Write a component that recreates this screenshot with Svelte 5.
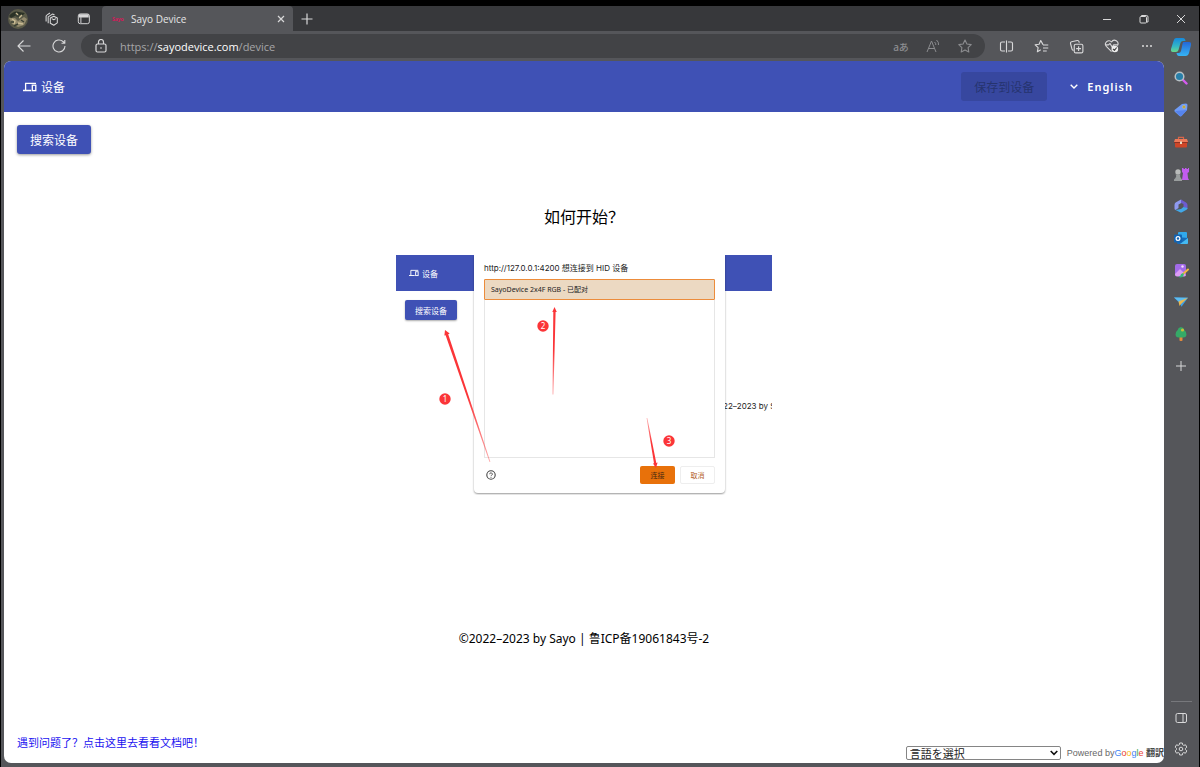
<script>
  let language = $state('');

  // little strokes only, 20x20 boxes
  const pageActions = [
    { name: 'Split screen', d: 'M8 4H4a2 2 0 0 0-2 2v8a2 2 0 0 0 2 2h4M12 4h4a2 2 0 0 1 2 2v8a2 2 0 0 1-2 2h-4M10 2v16' },
    { name: 'Favorites', d: 'M12 7.500 9 2 6.800 7 1.500 7.700l4 3.700-1 5.600L9 14.300M12 8h7M12 12h7M12 16h5' },
    { name: 'Collections', d: 'M6 15a2 2 0 0 1-2-1.500L2 6a2 2 0 0 1 1.500-2.300L11 2a2 2 0 0 1 2.300 1.500L13.600 5M9 7h7.500a2 2 0 0 1 2 2v7.500a2 2 0 0 1-2 2H9a2 2 0 0 1-2-2V9a2 2 0 0 1 2-2M12.800 9.500v6.500M9.500 12.800h6.500' },
  ];
</script>

<div class="browser">
  <header class="titlebar">
    <button class="slot" aria-label="Profile">
      <svg width="20" height="20" viewBox="0 0 20 20">
        <circle cx="10" cy="10" r="10" fill="#5a5a48" />
        <path d="M1 7Q6 1 11 3l6 1-3 3-5-1-6 3z" fill="#2b3226" />
        <path d="M1 9l6 0 3 3 6-4 3 2-3 6-6 2-6-3z" fill="#92896c" />
        <path d="M4 10l3 2-1 3M11 9l3-3M10 14l5 1M8 4l2 2" stroke="#c8bb93" stroke-width="1.500" fill="none" />
        <path d="M7 6l4 2M13 11l3 2M6 17l4-2M3 13l3 0" stroke="#3a4034" stroke-width="1.500" />
      </svg>
    </button>
    <button class="slot" aria-label="Workspaces">
      <svg class="line" width="14" height="14" viewBox="0 0 20 20">
        <path d="M9 8.500l5-2.500 5 2.500v7L14 19l-5-3zM11 9.500l3 1.500 3-1.500M6 16V7l6-4 3 1M3 13.500V6q0-1 1-1.600L8.500 1.500" />
      </svg>
    </button>
    <button class="slot" aria-label="Tab actions">
      <svg class="line" width="13" height="13" viewBox="0 0 20 20">
        <rect x="2" y="3" width="17" height="15" rx="3" /><path d="M3 5h15M3 7h15" stroke-width="3" /><path d="M6 8v9" />
      </svg>
    </button>
    <div class="tab">
      <span class="favicon">Sayo</span>
      <span class="tab-title">Sayo Device</span>
      <button class="close" aria-label="Close tab">
        <svg class="line" width="8" height="8" viewBox="0 0 8 8"><path d="M1 1l6 6M7 1L1 7" stroke-width="1.200" /></svg>
      </button>
    </div>
    <button class="new-tab" aria-label="New tab">
      <svg class="line" width="12" height="12" viewBox="0 0 12 12"><path d="M6 .5v11M.5 6h11" stroke-width="1.200" /></svg>
    </button>
    <div class="window-buttons">
      <button aria-label="Minimize"><svg class="line" width="10" height="10" viewBox="0 0 10 10"><path d="M1 5.500h8" stroke-width="1" /></svg></button>
      <button aria-label="Restore"><svg class="line" width="10" height="10" viewBox="0 0 10 10"><path d="M2.500 2V1.500h5a1.500 1.500 0 0 1 1.500 1.500v5H8" stroke-width="1" /><rect x="1" y="2.500" width="6.500" height="6.500" rx="1" stroke-width="1" /></svg></button>
      <button aria-label="Close"><svg class="line" width="10" height="10" viewBox="0 0 10 10"><path d="M1 1l8 8M9 1L1 9" stroke-width="1" /></svg></button>
    </div>
  </header>

  <div class="frame">
    <div class="main">
      <nav class="toolbar">
        <button class="tool" aria-label="Back">
          <svg class="line" width="14" height="14" viewBox="0 0 14 14"><path d="M13.500 7H1M6.500 1.500L1 7l5.500 5.500" stroke-width="1.100" /></svg>
        </button>
        <button class="tool" aria-label="Refresh">
          <svg class="line" width="14" height="14" viewBox="0 0 14 14"><path d="M13 7A6 6 0 1 1 11 2.500L12.500 4M12.800 1v3.300H9.500" stroke-width="1.100" /></svg>
        </button>
        <div class="address">
          <svg class="line" width="12" height="14" viewBox="0 0 12 14">
            <rect x="1" y="5" width="10" height="8" rx="1.500" stroke-width="1.200" /><path d="M3.500 5V3a2.500 2.500 0 0 1 5 0v2" stroke-width="1.200" /><circle cx="6" cy="9" r=".8" fill="#ddd" stroke="none" />
          </svg>
          <span class="url">https://<b>sayodevice.com</b>/device</span>
          <button class="translate" aria-label="Translate">aあ</button>
          <button aria-label="Read aloud">
            <svg class="line" width="14" height="14" viewBox="0 0 14 14"><path d="M1 13L5.500 2 10 13M2.500 9.500h6M8.500 3q1.500 1 1.300 3M10.500 1q2.500 2 2 5" stroke-width="1" /></svg>
          </button>
          <button aria-label="Add to favorites">
            <svg class="line" width="14" height="14" viewBox="0 0 14 14"><path d="M7 1l1.900 4 4.300.6-3.100 3 .7 4.400L7 10.900 3.200 13l.7-4.400-3.100-3L5.100 5z" stroke-width="1.100" /></svg>
          </button>
        </div>
        {#each pageActions as action}
          <button class="tool" aria-label={action.name}>
            <svg class="line" width="15" height="15" viewBox="0 0 20 20"><path d={action.d} /></svg>
          </button>
        {/each}
        <button class="tool" aria-label="Browser essentials">
          <svg class="line" width="15" height="14" viewBox="0 0 20 19">
            <path d="M10 17L3 10A4.600 4.600 0 0 1 10 4a4.600 4.600 0 0 1 8 5M2 8h4l2-2 3 5 2-3h5" />
            <circle cx="14.500" cy="13.500" r="4.500" fill="#eee" stroke="none" /><path d="M12 13.500l2 2 3-4" stroke="#444" />
          </svg>
        </button>
        <button class="tool" aria-label="More">
          <svg width="14" height="4" viewBox="0 0 14 4" fill="#ddd"><circle cx="3" cy="2" r="1" /><circle cx="7" cy="2" r="1" /><circle cx="11" cy="2" r="1" /></svg>
        </button>
      </nav>

      <div class="page">
        <div class="appbar">
          <a class="brand" href="/device">
            <svg width="14" height="10" viewBox="0 0 14 10" fill="none" stroke="#fff" stroke-width="1.300">
              <path d="M2.600 8V1.300H13M0 8.500h8" /><rect x="9.300" y="3.200" width="3.500" height="5.400" />
            </svg>
            <span>设备</span>
          </a>
          <button class="save" disabled>保存到设备</button>
          <button class="lang">
            <svg width="8" height="5" viewBox="0 0 8 5" fill="none" stroke="#fff" stroke-width="1.400"><path d="M.7.700L4 4 7.300.700" /></svg>
            <span>English</span>
          </button>
        </div>

        <main class="content">
          <button class="search">搜索设备</button>
          <h1>如何开始？</h1>

          <div class="guide">
            <div class="guide-bar">
              <svg width="10" height="8" viewBox="0 0 14 10" fill="none" stroke="#fff" stroke-width="1.300">
                <path d="M2.600 8V1.300H13M0 8.500h8" /><rect x="9.300" y="3.200" width="3.500" height="5.400" />
              </svg>
              <span>设备</span>
            </div>
            <button class="guide-search">搜索设备</button>
            <span class="guide-copy">22–2023 by S</span>

            <div class="dialog">
              <p>http://127.0.0.1:4200 想连接到 HID 设备</p>
              <div class="devices">
                <div class="device">SayoDevice 2x4F RGB - 已配对</div>
              </div>
              <div class="dialog-actions">
                <svg width="10" height="10" viewBox="0 0 10 10" fill="none" stroke="#444">
                  <circle cx="5" cy="5" r="4.200" stroke-width="1.100" /><path d="M3.700 4.200a1.300 1.300 0 1 1 1.900 1.100Q5 5.600 5 6.200M5 7v.8" stroke-width=".9" />
                </svg>
                <button class="connect">连接</button>
                <button class="cancel">取消</button>
              </div>
            </div>

            <svg class="arrows" viewBox="0 0 376 239">
              <defs>
                <linearGradient id="up" x1="0" y1="0" x2="0" y2="1">
                  <stop offset="0.500" stop-color="#fb3538" /><stop offset="1" stop-color="#fb3538" stop-opacity=".4" />
                </linearGradient>
                <linearGradient id="down" x1="0" y1="1" x2="0" y2="0">
                  <stop offset="0.500" stop-color="#fb3538" /><stop offset="1" stop-color="#fb3538" stop-opacity=".4" />
                </linearGradient>
              </defs>
              <path d="M49 75l-.6 5.500 1.200-.3L93.500 207l.9-.2L52.200 79.300l1.500-.7z" fill="url(#up)" />
              <path d="M158.500 52l-2.200 5 1 .1-.8 82.400h.9l2.200-82.400 1.200-.1z" fill="url(#up)" />
              <path d="M260 213l-3-4.500 1-.3L250.600 163l.7-.1 9 45 1.300-.3z" fill="url(#down)" />
              {#each [[49, 144], [147, 71], [273, 186]] as [x, y], i}
                <circle cx={x} cy={y} r="5.700" fill="#fb3538" />
                <text {x} y={y + 3} text-anchor="middle">{i + 1}</text>
              {/each}
            </svg>
          </div>

          <p class="copyright">©2022–2023 by Sayo | 鲁ICP备19061843号-2</p>
        </main>

        <footer>
          <a class="docs" href="/docs">遇到问题了？点击这里去看看文档吧！</a>
          <div class="google">
            <div class="picker">
              <select bind:value={language} aria-label="言語を選択">
                <option value="">言語を選択</option>
              </select>
              <svg width="8" height="6" viewBox="0 0 8 6" fill="none" stroke="#111" stroke-width="1.600"><path d="M.7 1L4 4.300 7.300 1" /></svg>
            </div>
            <span>Powered by</span>
            <a class="logo" href="/translate"><i class="b">G</i><i class="r">o</i><i class="y">o</i><i class="b">g</i><i class="g">l</i><i class="r">e</i> <b>翻訳</b></a>
          </div>
        </footer>
      </div>
    </div>

    <aside class="sidebar">
      <button aria-label="Copilot">
        <svg width="20" height="20" viewBox="0 0 20 20">
          <defs>
            <linearGradient id="cp1" x1="0" y1="0" x2="0" y2="1"><stop offset="0" stop-color="#1689dd" /><stop offset=".6" stop-color="#35b8c4" /><stop offset="1" stop-color="#69d98c" /></linearGradient>
            <linearGradient id="cp2" x1="0" y1="0" x2="0" y2="1"><stop offset="0" stop-color="#2468d8" /><stop offset="1" stop-color="#36b5f5" /></linearGradient>
          </defs>
          <path d="M5 1h7q2 0 2.500 3H12q-2 0-2.600 2L7.500 13q-.6 2-2.500 2H2q-2.500 0-2-3L2.500 4Q3.300 1 5 1z" fill="url(#cp1)" />
          <path d="M12.500 5H18q2.500 0 2 3l-2 8q-.8 3-3.500 3H8q-2 0-2.500-3h2q2 0 2.500-2l1.500-7q.3-2 1-2z" fill="url(#cp2)" />
        </svg>
      </button>
      <button aria-label="Search">
        <svg width="14" height="14" viewBox="0 0 14 14"><path d="M8.500 8.500l4 4" stroke="#d65bef" stroke-width="2.400" stroke-linecap="round" /><circle cx="5.500" cy="5.500" r="4.300" fill="#287fa9" stroke="#b8c1c5" stroke-width="1.500" /></svg>
      </button>
      <button aria-label="Shopping">
        <svg width="14" height="14" viewBox="0 0 14 14"><path d="M8 1l4-.5q1.500 0 1.500 1.500L13 7l-5.500 6q-1 .8-2 0L.8 8.700q-.8-1 0-2z" fill="#6f9cf8" /><path d="M1 8l5 5q.7.500 1.500 0L13 7" fill="#5684ed" /><circle cx="10" cy="3.900" r="1.600" fill="#efc13a" /><circle cx="10" cy="3.900" r=".6" fill="#465" /></svg>
      </button>
      <button aria-label="Tools">
        <svg width="14" height="14" viewBox="0 0 14 14"><path d="M4.500 4V2.300h5V4" fill="none" stroke="#d76649" stroke-width="1.200" /><path d="M1 4h12l1 3v.5H0V7z" fill="#ed7958" /><path d="M1 8h12v3.500q0 1-1 1H2q-1 0-1-1z" fill="#ce4628" /><path d="M0 7.500h14" stroke="#8d3324" /><rect x="6" y="6.500" width="2" height="2.500" fill="#e6ddc5" /></svg>
      </button>
      <button aria-label="Games">
        <svg width="15" height="15" viewBox="0 0 15 15"><path d="M8 1h1.500v1H11V1h1.500v1H14V1h1v4l-1.500 1 .5 5 1 2H8l1-7-1-1z" fill="#c35cf0" /><circle cx="4" cy="5" r="2.700" fill="#b9bbba" /><path d="M1.500 7.500h5L6 9q.5 2 2 3.500V14H0v-1.500Q1.800 11 2.300 9z" fill="#999d9d" /></svg>
      </button>
      <button aria-label="Microsoft 365">
        <svg width="14" height="14" viewBox="0 0 14 14"><path d="M7 .5L2 3.300Q.5 4 .5 6v3.500q0 1 1 1.500l3-2V5.500L9 3z" fill="#8f9af0" /><path d="M7 .5l5 3Q13.500 4.500 13.500 6v4L9.500 8V5L7 4z" fill="#6d5cd0" /><path d="M1.500 11L6 13.300q1 .6 2 0l4.500-2.500q1-.5 1-1.800L9.500 8 7 10z" fill="#42a8e8" /></svg>
      </button>
      <button aria-label="Outlook">
        <svg width="14" height="14" viewBox="0 0 14 14"><rect x="4" y="1" width="9" height="8" rx="1" fill="#31a9ec" /><path d="M3 6l11 1v5q0 1-1 1H4q-1 0-1-1z" fill="#176cb9" /><path d="M14 7v5q0 1-1 1H6z" fill="#46baf2" /><rect y="3.500" width="8" height="8" rx="1" fill="#1264b3" /><circle cx="4" cy="7.500" r="1.900" fill="none" stroke="#fff" stroke-width="1.200" /></svg>
      </button>
      <button aria-label="Image creator">
        <svg width="15" height="15" viewBox="0 0 15 15"><rect x="1" y="1" width="11" height="12" rx="2" fill="#a26be8" /><path d="M1 11l5-5 6 6q-.5 1.500-2 1.500H3q-2 0-2-2z" fill="#dc9cf5" /><circle cx="8.500" cy="3.500" r="1.200" fill="#f6dcfa" /><path d="M14 6.500L9 11" stroke="#f2b63e" stroke-width="2" stroke-linecap="round" /><path d="M9.500 10q1 2-1 4-2 .8-4 0Q7 13 7 11z" fill="#37b77e" /></svg>
      </button>
      <button aria-label="Drop">
        <svg width="14" height="14" viewBox="0 0 14 14"><path d="M0 2.500l14 .3-6.500 9L5.500 8z" fill="#3d9ee4" /><path d="M0 2.500l14 .3L5.500 7z" fill="#5cbdf1" /><path d="M14 2.800L4.500 6.500l1 4.500L7 9z" fill="#e9b850" /></svg>
      </button>
      <button aria-label="Tree">
        <svg width="14" height="16" viewBox="0 0 14 16"><path d="M5.500 10h3v4.500q-1.500 1-3 0z" fill="#e48a3c" /><path d="M7 1q3 .5 3.300 3Q13 6 12.500 9q-.5 2.500-3 2.500h-5Q2 11.500 1.500 9 1 6 3.700 4 4 1.500 7 1z" fill="#35a967" /><circle cx="8.500" cy="4" r="1.600" fill="#c8bd38" /></svg>
      </button>
      <button aria-label="Customize">
        <svg class="line" width="10" height="10" viewBox="0 0 10 10"><path d="M5 0v10M0 5h10" stroke-width="1" /></svg>
      </button>
      <div class="bottom">
        <button aria-label="Toggle sidebar">
          <svg class="line" width="12" height="12" viewBox="0 0 12 12"><rect x="1" y="1.500" width="10.500" height="9" rx="1.500" stroke-width="1" /><path d="M8 1.500v9" stroke-width="1" /></svg>
        </button>
        <button aria-label="Settings">
          <svg class="line" width="14" height="14" viewBox="0 0 14 14">
            <path d="M5.700 1h2.600l.4 1.800 1 .6 1.800-.6 1.300 2.300L11.500 6.400v1.200l1.300 1.300-1.300 2.300-1.800-.6-1 .6L8.300 13H5.700l-.4-1.800-1-.6-1.800.6L1.200 8.900l1.300-1.300V6.400L1.200 5.100l1.300-2.300 1.800.6 1-.6z" stroke-width="1" /><circle cx="7" cy="7" r="1.800" stroke-width="1" />
          </svg>
        </button>
      </div>
    </aside>
  </div>
</div>

<style>
  :global(body) {
    background: #000;
  }
  .browser {
    --blue: #3f51b5;
    --chrome: #55565a;
    box-sizing: border-box;
    min-height: 100vh;
    padding: 6px 1px 0;
    display: flex;
    flex-direction: column;
    font-family: "Noto Sans", "Noto Sans CJK SC", sans-serif;
    font-size: 12px;
    color: #000;
  }
  button {
    font: inherit;
    color: inherit;
    border: 0;
    padding: 0;
    background: none;
    display: flex;
    align-items: center;
    justify-content: center;
    flex: none;
  }
  h1, p {
    margin: 0;
  }
  a {
    text-decoration: none;
  }
  svg {
    flex: none;
  }
  .line {
    fill: none;
    stroke: #d8d8d9;
    stroke-width: 1.5;
    stroke-linejoin: round;
  }

  /* title bar */
  .titlebar {
    height: 25px;
    display: flex;
    background: #37383b;
    color: #e6e6e6;
  }
  .slot {
    width: 33px;
  }
  .tab {
    box-sizing: border-box;
    width: 191px;
    margin-left: 2px;
    padding: 0 8px 0 10px;
    display: flex;
    align-items: center;
    background: var(--chrome);
    border-radius: 4px 4px 0 0;
    font-family: "Open Sans", sans-serif;
    font-size: 10px;
    line-height: 14px;
  }
  .favicon {
    width: 19px;
    font-size: 5px;
    font-weight: 700;
    color: #d41859;
  }
  .tab-title {
    flex: 1;
  }
  .close {
    width: 8px;
  }
  .new-tab {
    width: 28px;
  }
  .window-buttons {
    margin-left: auto;
    display: flex;
  }
  .window-buttons button {
    width: 37px;
  }

  .frame {
    flex: 1;
    display: flex;
    background: var(--chrome);
  }
  .main {
    flex: 1;
    min-width: 0;
    display: flex;
    flex-direction: column;
    padding: 0 0 4px 3px;
  }

  /* toolbar */
  .toolbar {
    height: 30px;
    display: flex;
    align-items: center;
    color: #ddd;
  }
  .tool {
    width: 35px;
    height: 24px;
  }
  .tool:first-child {
    margin-left: 2px;
  }
  .address {
    flex: 1;
    height: 24px;
    margin: 0 4px 0 5px;
    padding: 0 4px 0 14px;
    display: flex;
    align-items: center;
    background: #424346;
    border-radius: 12px;
  }
  .url {
    flex: 1;
    margin-left: 13px;
    font-family: "Open Sans", sans-serif;
    font-size: 11px;
    color: #a6a6a8;
  }
  .url b {
    font-weight: 400;
    color: #fff;
  }
  .address button {
    width: 32px;
    color: #8b8c8f;
  }
  .address button .line {
    stroke: #8b8c8f;
  }
  .address .translate {
    font-size: 10px;
    font-weight: 500;
  }

  /* page */
  .page {
    flex: 1;
    display: flex;
    flex-direction: column;
    overflow: hidden;
    border-radius: 7px;
    background: #fff;
  }
  .appbar {
    height: 51px;
    padding: 0 31px 0 19px;
    display: flex;
    align-items: center;
    background: var(--blue);
    color: #fff;
  }
  .brand {
    margin-right: auto;
    display: flex;
    align-items: center;
    gap: 4px;
    color: #fff;
  }
  .save {
    height: 29px;
    padding: 0 13px;
    border-radius: 3px;
    background: #37479f;
    color: #26346f;
  }
  .lang {
    margin-left: 23px;
    gap: 9px;
    font-size: 11px;
    font-weight: 600;
    letter-spacing: 1px;
  }
  .content {
    padding: 13px;
    display: flex;
    flex-direction: column;
    align-items: center;
  }
  .search {
    align-self: flex-start;
    height: 29px;
    padding: 0 13px;
    border-radius: 3px;
    background: var(--blue);
    box-shadow: 0 1px 3px #0006;
    color: #fff;
  }
  h1 {
    margin-top: 51px;
    font-size: 16px;
    line-height: 24px;
    font-weight: 400;
  }
  .copyright {
    margin-top: 134px;
    line-height: 20px;
  }

  /* how-to picture */
  .guide {
    position: relative;
    width: 376px;
    height: 240px;
    margin-top: 26px;
    overflow: hidden;
    font-size: 8px;
    color: #222;
  }
  .guide-bar {
    height: 36px;
    padding-left: 13px;
    display: flex;
    align-items: center;
    gap: 3px;
    background: var(--blue);
    color: #fff;
  }
  .guide-search {
    height: 20px;
    margin: 9px;
    padding: 0 10px;
    border-radius: 2px;
    background: var(--blue);
    box-shadow: 0 1px 2px #0005;
    color: #fff;
  }
  .guide-copy {
    position: absolute;
    left: 327px;
    top: 145px;
    white-space: nowrap;
    font-family: "Inter", sans-serif;
    line-height: 12px;
  }
  .dialog {
    position: absolute;
    top: 0;
    left: 78px;
    box-sizing: border-box;
    width: 251px;
    height: 238px;
    padding: 7px 10px 9px;
    display: flex;
    flex-direction: column;
    border-radius: 0 0 4px 4px;
    background: #fff;
    box-shadow: 0 1px 2px #0006;
  }
  .dialog p {
    font-family: "Inter", "Noto Sans CJK SC", sans-serif;
    line-height: 12px;
  }
  .devices {
    flex: 1;
    margin: 5px 0 8px;
    border: 1px solid #e6e6e6;
  }
  .device {
    margin: -1px;
    padding-left: 6px;
    border: 1px solid #ec8c3b;
    border-radius: 1px;
    background: #ecd9c2;
    font-size: 7px;
    line-height: 19px;
  }
  .dialog-actions {
    display: flex;
    align-items: center;
    gap: 5px;
    padding-left: 2px;
    font-size: 7px;
  }
  .dialog-actions button {
    box-sizing: border-box;
    width: 35px;
    height: 18px;
    border-radius: 2px;
  }
  .connect {
    margin-left: auto;
    background: #e8710a;
    color: #4b2a10;
  }
  .cancel {
    border: 1px solid #eee;
    color: #b4622a;
  }
  .arrows {
    position: absolute;
    top: 0;
    left: 0;
    width: 376px;
    height: 239px;
  }
  .arrows text {
    font-size: 8px;
    fill: #fff;
  }

  footer {
    margin-top: auto;
    padding-left: 13px;
    display: flex;
    align-items: flex-end;
    justify-content: space-between;
  }
  .docs {
    padding-bottom: 12px;
    font-size: 11px;
    line-height: 16px;
    color: #1a12f0;
  }
  .google {
    display: flex;
    align-items: center;
    padding-bottom: 3px;
    font-family: "Liberation Sans", "Noto Sans CJK JP", sans-serif;
    font-size: 9px;
    line-height: 14px;
    color: #666;
    white-space: nowrap;
  }
  .picker {
    display: grid;
    align-items: center;
    margin-right: 6px;
  }
  .picker select,
  .picker svg {
    grid-area: 1 / 1;
  }
  .picker svg {
    justify-self: end;
    margin-right: 3px;
    pointer-events: none;
  }
  select {
    appearance: none;
    box-sizing: border-box;
    width: 155px;
    height: 14px;
    padding: 0 3px;
    border: 1px solid #858585;
    border-radius: 2px;
    background: #fff;
    font-family: "Noto Sans CJK JP", sans-serif;
    font-size: 11px;
    line-height: 12px;
    color: #222;
  }
  .logo {
    color: #444;
  }
  .logo i {
    font-style: normal;
  }
  .b { color: #4285f4; }
  .r { color: #ea4335; }
  .y { color: #fbbc05; }
  .g { color: #34a853; }

  /* right rail */
  .sidebar {
    width: 35px;
    padding-bottom: 2px;
    display: flex;
    flex-direction: column;
  }
  .sidebar button {
    width: 34px;
    height: 32px;
  }
  .sidebar button:first-child {
    height: 31px;
  }
  .bottom {
    margin-top: auto;
  }
  .bottom::before {
    content: "";
    display: block;
    height: 1px;
    margin: 0 7px;
    background: #77787c;
  }
</style>
